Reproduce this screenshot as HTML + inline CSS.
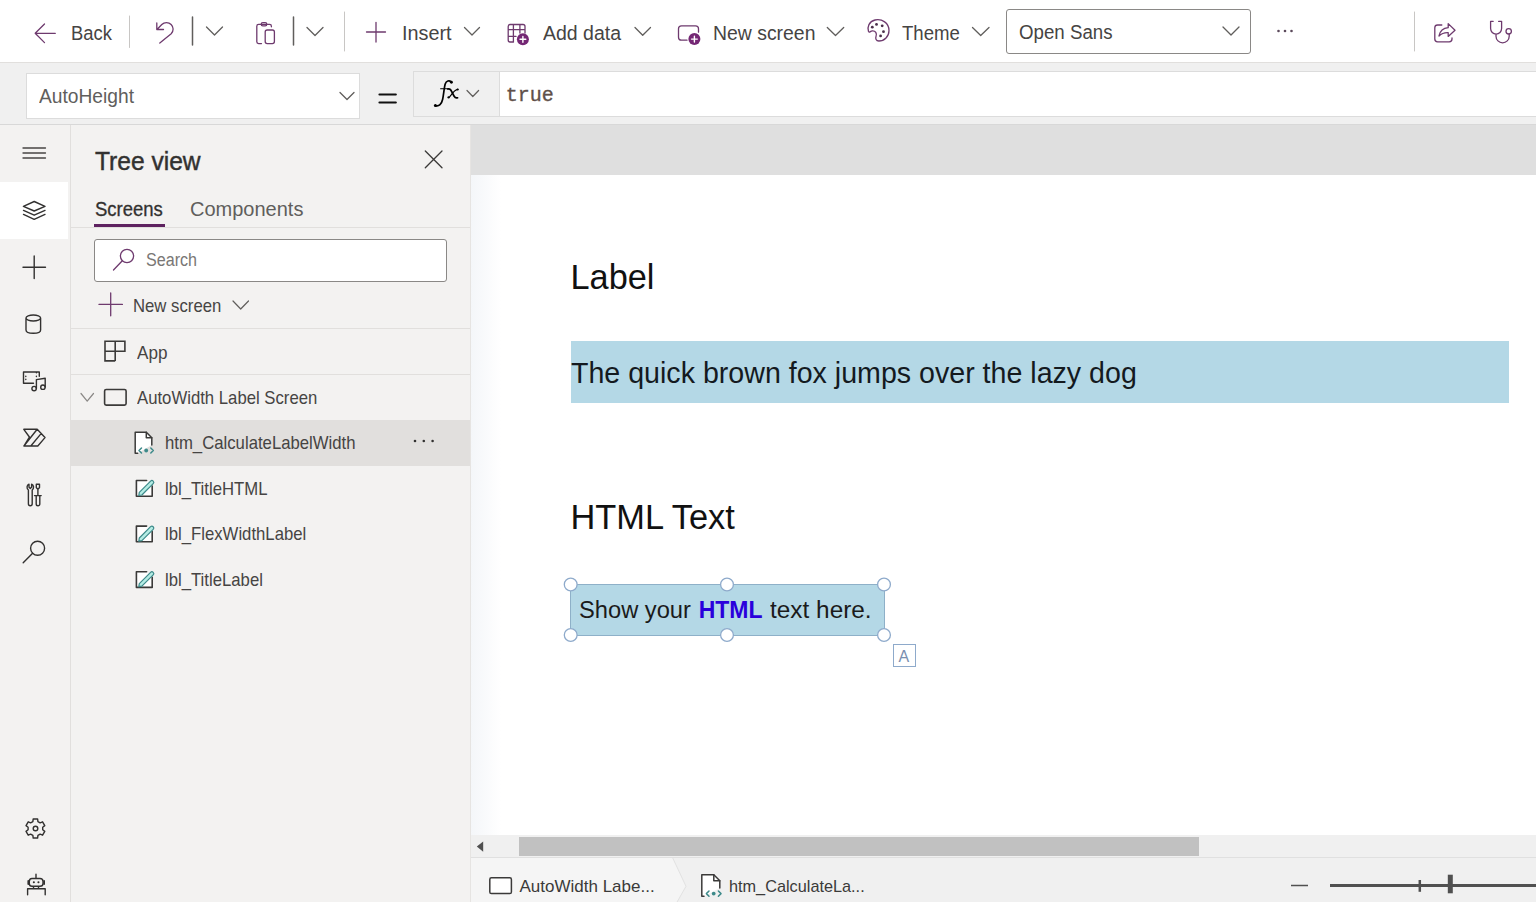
<!DOCTYPE html>
<html><head><meta charset="utf-8">
<style>
*{margin:0;padding:0;box-sizing:border-box}
html,body{width:1536px;height:902px;overflow:hidden;background:#fff;font-family:"Liberation Sans",sans-serif;color:#323130}
.a{position:absolute}
.t{position:absolute;white-space:nowrap;line-height:1;transform-origin:0 0}
svg.i{position:absolute;left:0;top:0;width:1536px;height:902px;overflow:visible}
</style></head><body>

<!-- ===== top toolbar ===== -->
<div class="a" style="left:0;top:0;width:1536px;height:63px;background:#fff;border-bottom:1px solid #e1dfdd"></div>
<div class="t" style="left:70.5px;top:22.9px;font-size:20px;transform:scaleX(.92);color:#464443">Back</div>
<div class="t" style="left:402.3px;top:22.8px;font-size:20px;transform:scaleX(.99);color:#464443">Insert</div>
<div class="t" style="left:543.2px;top:22.8px;font-size:20px;transform:scaleX(.975);color:#464443">Add data</div>
<div class="t" style="left:712.5px;top:22.8px;font-size:20px;transform:scaleX(.97);color:#464443">New screen</div>
<div class="t" style="left:901.8px;top:22.8px;font-size:20px;transform:scaleX(.93);color:#464443">Theme</div>
<div class="a" style="left:1006px;top:9px;width:245px;height:45px;border:1px solid #8a8886;border-radius:3px;background:#fff"></div>
<div class="t" style="left:1018.5px;top:22.1px;font-size:20px;transform:scaleX(.935);color:#464443">Open Sans</div>

<!-- ===== formula bar ===== -->
<div class="a" style="left:0;top:63px;width:1536px;height:62px;background:#f0f0f0;border-bottom:1px solid #d8d8d8"></div>
<div class="a" style="left:26px;top:73px;width:334px;height:46px;background:#fff;border:1px solid #dcdcdc"></div>
<div class="t" style="left:39px;top:85.6px;font-size:20px;transform:scaleX(.96);color:#605e5c">AutoHeight</div>
<div class="a" style="left:413px;top:71px;width:87px;height:46px;background:#f0f0f0;border:1px solid #dcdcdc"></div>
<div class="a" style="left:499px;top:71px;width:1037px;height:46px;background:#fff;border:1px solid #dcdcdc;border-right:none"></div>
<div class="t" style="left:505.8px;top:85.5px;font-size:20px;font-family:'Liberation Mono',monospace;-webkit-text-stroke:.35px #5f5049;color:#5f5049">true</div>
<svg class="i" viewBox="0 0 1536 902" fill="none" stroke="#000" stroke-linecap="round">
 <path d="M451,81.6 C449.3,80.2 446.3,80.6 445.2,84 C444.1,88 443.6,95 442.6,99.5 C441.6,104 439,106.6 435.6,105.6" stroke-width="1.7"/>
 <circle cx="451.4" cy="82.3" r="1.45" fill="#000" stroke="none"/>
 <circle cx="435.4" cy="105.4" r="1.5" fill="#000" stroke="none"/>
 <path d="M440.6,88.7 H448.6" stroke-width="1.1"/>
 <path d="M447.8,89 C449.5,88.6 450.8,89.5 451.6,91.5 L454,96 C455,97.8 456.2,98.3 457.6,97.8" stroke-width="1.7"/>
 <path d="M457.8,89.4 C455,89.6 452.2,93.4 450.6,95.6 C449.6,97 448.8,97.8 448.2,97.5" stroke-width="1.1"/>
 <circle cx="457.7" cy="89.5" r="1.1" fill="#000" stroke="none"/>
 <circle cx="448.6" cy="97.4" r="1.15" fill="#000" stroke="none"/>
</svg>

<!-- ===== left rail ===== -->
<div class="a" style="left:0;top:125px;width:71px;height:777px;background:#f3f2f1;border-right:1px solid #e1dfdd"></div>
<div class="a" style="left:0;top:182px;width:68px;height:57px;background:#fff"></div>

<!-- ===== tree view pane ===== -->
<div class="a" style="left:71px;top:125px;width:400px;height:777px;background:#f3f2f1;border-right:1px solid #e6e4e2"></div>
<div class="t" style="left:94.8px;top:147.7px;font-size:26px;font-weight:400;-webkit-text-stroke:.45px #323130;transform:scaleX(.945);color:#323130">Tree view</div>
<div class="t" style="left:94.6px;top:199.3px;font-size:20px;-webkit-text-stroke:.3px #323130;transform:scaleX(.925);color:#323130">Screens</div>
<div class="t" style="left:190px;top:199.3px;font-size:20px;color:#605e5c">Components</div>
<div class="a" style="left:94px;top:224px;width:71px;height:3px;background:#5e2260"></div>
<div class="a" style="left:71px;top:227px;width:399px;height:1px;background:#e1dfdd"></div>
<div class="a" style="left:94px;top:239px;width:353px;height:43px;border:1px solid #8a8886;border-radius:3px;background:#fff"></div>
<div class="t" style="left:146px;top:251.4px;font-size:18px;transform:scaleX(.895);color:#797775">Search</div>
<div class="t" style="left:133.1px;top:295.7px;font-size:19px;transform:scaleX(.88);color:#464443">New screen</div>
<div class="a" style="left:71px;top:328px;width:399px;height:1px;background:#e1dfdd"></div>
<div class="t" style="left:137.2px;top:342.8px;font-size:19px;transform:scaleX(.9);color:#464443">App</div>
<div class="a" style="left:71px;top:374px;width:399px;height:1px;background:#e1dfdd"></div>
<div class="t" style="left:137.2px;top:388.3px;font-size:19px;transform:scaleX(.88);color:#464443">AutoWidth Label Screen</div>
<div class="a" style="left:71px;top:420px;width:399px;height:46px;background:#e1dfdd"></div>
<div class="t" style="left:164.8px;top:433.4px;font-size:19px;transform:scaleX(.88);color:#464443">htm_CalculateLabelWidth</div>
<div class="t" style="left:164.6px;top:478.6px;font-size:19px;transform:scaleX(.88);color:#464443">lbl_TitleHTML</div>
<div class="t" style="left:164.6px;top:524.2px;font-size:19px;transform:scaleX(.88);color:#464443">lbl_FlexWidthLabel</div>
<div class="t" style="left:164.6px;top:569.5px;font-size:19px;transform:scaleX(.88);color:#464443">lbl_TitleLabel</div>

<!-- ===== canvas ===== -->
<div class="a" style="left:471px;top:125px;width:1065px;height:50px;background:#dfdfdf"></div>
<div class="a" style="left:471px;top:175px;width:1065px;height:660px;background:#fff"></div>
<div class="a" style="left:471px;top:175px;width:30px;height:660px;background:linear-gradient(to right,#f4f6f9,#fff)"></div>
<div class="t" style="left:570.5px;top:259.5px;font-size:34.3px;color:#111">Label</div>
<div class="a" style="left:571px;top:341px;width:938px;height:62px;background:#b4d8e6"></div>
<div class="t" style="left:571px;top:358.6px;font-size:29px;transform:scaleX(.986);color:#141a1f">The quick brown fox jumps over the lazy dog</div>
<div class="t" style="left:570.5px;top:499.8px;font-size:34.4px;color:#111">HTML Text</div>
<div class="a" style="left:570px;top:584px;width:315px;height:52px;background:#b4d8e6;border:1px solid #8eb0c8"></div>
<div class="t" style="left:578.7px;top:598.6px;font-size:23px;transform:scaleX(1.03);color:#1b1b1b">Show your</div>
<div class="t" style="left:698.7px;top:598.6px;font-size:23px;font-weight:700;color:#2a00dc">HTML</div>
<div class="t" style="left:770.4px;top:598.6px;font-size:23px;transform:scaleX(1.06);color:#1b1b1b">text here.</div>
<div class="a" style="left:893px;top:644px;width:23px;height:23px;border:1px solid #8eaacb;background:#fff"></div>
<div class="t" style="left:898.5px;top:649px;font-size:16px;color:#7a8fb0">A</div>

<!-- scrollbar -->
<div class="a" style="left:471px;top:835px;width:1065px;height:23px;background:#f0f0f0;border-bottom:1px solid #e0e0e0"></div>
<div class="a" style="left:519px;top:837px;width:680px;height:19px;background:#c1c1c1"></div>

<!-- status bar -->
<div class="a" style="left:471px;top:858px;width:1065px;height:44px;background:#f0f0f0"></div>
<svg class="i" viewBox="0 0 1536 902"><path d="M471,858 H672.5 L686,886.3 L677.1,902 H471 Z" fill="#f5f5f5"/><path d="M672.5,857.5 L686,886.3 L677.1,902" fill="none" stroke="#e2e2e2" stroke-width="1"/></svg>
<div class="t" style="left:519.5px;top:877.9px;font-size:17px;color:#3b3a39">AutoWidth Labe...</div>
<div class="t" style="left:729.3px;top:877.8px;font-size:17px;transform:scaleX(.957);color:#3b3a39">htm_CalculateLa...</div>

<!-- ===== icons ===== -->
<svg class="i" viewBox="0 0 1536 902" fill="none" stroke-linecap="round" stroke-linejoin="round">
 <!-- toolbar -->
 <g stroke="#6e3a6e" stroke-width="1.3">
  <path d="M35.2,33.3 H55.3 M44.5,24 L35.2,33.3 L44.5,42.6"/>
  <path d="M156.8,23 V29.5 H163.5 M157.2,29.2 L161.8,24.5 A6.6,6.6 0 0 1 171.2,33.8 L159.8,43"/>
  <path d="M261.5,43.6 H258.6 Q256.8,43.6 256.8,41.8 V26.2 Q256.8,24.4 258.6,24.4 H269.6 Q271.4,24.4 271.4,26.2 V26.8"/>
  <rect x="261.2" y="22.6" width="5.6" height="3.2" rx="1.6"/>
  <rect x="265.2" y="30" width="9.2" height="13.6" rx="2"/>
  <path d="M366.5,32 H385.5 M376,22.3 V42"/>
  <path d="M513.5,42 H510 Q508.2,42 508.2,40 V26.5 Q508.2,24.5 510.2,24.5 H523 Q525,24.5 525,26.5 V33 M508.2,29.6 H525 M508.2,36.4 H516 M513.4,24.5 V42 M519.9,24.5 V33"/>
  <path d="M687,40.2 H681.5 Q678.5,40.2 678.5,37.2 V28.8 Q678.5,25.8 681.5,25.8 H695.5 Q698.5,25.8 698.5,28.8 V32.2"/>
  <path d="M868.5,31.5 C867,27 869,21.5 875,20 C882,18.5 889,23 889,30.5 C889,36.5 884.5,41 878.8,41 C876,41 875.3,38.5 876,36.5 C877.2,33.5 875.5,30.5 872.3,30.8 C870.3,31 869.5,33.2 868.5,31.5 Z"/>
  <path d="M1441.8,25 H1437.6 Q1434.8,25 1434.8,27.8 V39 Q1434.8,41.8 1437.6,41.8 H1449.2 Q1452,41.8 1452,39 V38"/>
  <path d="M1439,36 C1440,31 1443,28 1448.2,27.7 V23.6 L1455,30.2 L1448.2,36.4 V32.7 C1444,32.5 1441,34 1439,36 Z"/>
  <path d="M1493.2,21.3 H1490.6 V28.6 A5.5,5.5 0 0 0 1501.6,28.6 V21.3 H1498.6 M1496,34.2 V36.2 A6.6,6.6 0 0 0 1509.2,36.2 V34"/>
  <circle cx="1508.7" cy="31.3" r="2.7"/>
 </g>
 <g fill="#742774">
  <circle cx="522.9" cy="39.3" r="6"/>
  <circle cx="694.4" cy="39.1" r="6"/>
 </g>
 <g stroke="#fff" stroke-width="1.4">
  <path d="M520,39.3 H525.8 M522.9,36.4 V42.2"/>
  <path d="M691.5,39.1 H697.3 M694.4,36.2 V42"/>
 </g>
 <g fill="#4a2f4a">
  <circle cx="872.3" cy="27.2" r="1.4"/><circle cx="876.5" cy="24.4" r="1.4"/><circle cx="882.2" cy="25.8" r="1.4"/><circle cx="883.5" cy="31.7" r="1.4"/><circle cx="880.6" cy="35.9" r="1.4"/>
 </g>
 <g stroke="#605e5c" stroke-width="1.3">
  <path d="M206.5,27 L214.5,35 L222.5,27"/>
  <path d="M307,27.5 L315,35.5 L323,27.5"/>
  <path d="M464.5,27.5 L472,35 L479.5,27.5"/>
  <path d="M635,27.5 L642.7,35.2 L650.5,27.5"/>
  <path d="M827.3,27.5 L835.5,35.5 L843.7,27.5"/>
  <path d="M972.5,27.5 L980.7,35.5 L989,27.5"/>
  <path d="M1223,27 L1231,35 L1239,27"/>
  <path d="M340,92.5 L347,99.5 L354,92.5"/>
 </g>
 <g stroke="#c8c6c4" stroke-width="1">
  <path d="M129.5,16 V47.5 M344.5,12 V51 M1414.5,12 V51"/>
 </g>
 <g stroke="#605e5c" stroke-width="1.5">
  <path d="M192.5,17 V45 M293.5,17 V45"/>
 </g>
 <g fill="#5c4a5c">
  <circle cx="1278.5" cy="31" r="1.3"/><circle cx="1285" cy="31" r="1.3"/><circle cx="1291.5" cy="31" r="1.3"/>
 </g>
 <!-- formula -->
 <g stroke="#111" stroke-width="2.2"><path d="M379.5,94.5 H395.8 M379.5,102.5 H395.8"/></g>
 <g stroke="#605e5c" stroke-width="1.2"><path d="M467,90.5 L472.8,96.5 L478.6,90.5"/></g>
</svg>


<!-- ===== rail, tree & canvas icons ===== -->
<svg class="i" viewBox="0 0 1536 902" fill="none" stroke-linecap="round" stroke-linejoin="round">
 <g stroke="#323130" stroke-width="1.4">
  <path d="M23,148 H45.5 M23,153 H45.5 M23,158 H45.5" stroke="#484644" stroke-width="1.3"/>
  <path d="M34.2,201.5 L45,206.4 L34.2,211 L23.4,206.4 Z M23.5,210.4 L34.2,215.2 L45,210.4 M23.5,214.4 L34.2,219.4 L45,214.4"/>
  <path d="M23,267.3 H45.5 M34.2,256 V278.6"/>
  <path d="M26,318 V330 Q26,333.3 33.3,333.3 Q40.6,333.3 40.6,330 V318 M26,318 A7.3,3 0 0 0 40.6,318 A7.3,3 0 0 0 26,318"/>
  <path d="M39.3,376.3 V372 H23.5 V383.2 H33.5 M25.8,376.3 V376.5 M25.8,379.3 V379.5 M36.4,372.5 V372.7 M36.4,376.3 V376.5"/>
  <path d="M36.4,388.5 V379.6 L45.2,378.2 V387"/>
  <circle cx="34.1" cy="388.6" r="2.2"/><circle cx="42.9" cy="387.2" r="2.2"/>
  <path d="M23.8,429.3 H37.2 L45,437.6 L37.8,446 H23.9 L29.4,437 Z M37.2,429.3 L23.9,446 M41.1,433.6 L30.8,446"/>
  <path d="M28.4,490 V503.8 A1.9,1.9 0 0 0 32.2,503.8 V490 A3.4,3.4 0 0 0 31.6,484.2 V487.3 L30.3,488.4 L29,487.3 V484.2 A3.4,3.4 0 0 0 28.4,490 Z"/>
  <path d="M36.3,484.3 H39.5 V487.5 L38.6,488.7 H37.2 L36.3,487.5 Z M37.9,488.7 V495.5 M34.5,495.6 H41.2 M36.2,495.6 V504 A1.8,1.8 0 0 0 39.8,504 V495.6"/>
  <circle cx="37.6" cy="548.3" r="7"/><path d="M32.6,553.3 L23.2,562.7"/>
  <path d="M32.87,821.55 L33.20,818.95 L37.60,818.95 L37.93,821.55 L40.16,822.83 L42.57,821.82 L44.77,825.63 L42.69,827.22 L42.69,829.78 L44.77,831.37 L42.57,835.18 L40.16,834.17 L37.93,835.45 L37.60,838.05 L33.20,838.05 L32.87,835.45 L30.64,834.17 L28.23,835.18 L26.03,831.37 L28.11,829.78 L28.11,827.22 L26.03,825.63 L28.23,821.82 L30.64,822.83 Z"/>
  <circle cx="35.5" cy="828.5" r="2.3"/>
  <path d="M36,874.3 V878.3 M32,878.5 H40 Q43,878.5 43,881.5 V883.5 Q43,886.3 40,886.3 H32 Q29.3,886.3 29.3,883.5 V881.5 Q29.3,878.5 32,878.5 Z M33.5,886.3 V888.8 M38.5,886.3 V888.8 M27.6,894.8 V888.8 H45.2 V894.8"/>
  <path d="M33.8,882.2 h.1 M38.4,882.2 h.1" stroke-width="2"/>
  <path d="M28.3,881 V884 M44.1,881 V884" stroke-width="1.8"/>
 </g>
 <g stroke="#3b3a39" stroke-width="1.3">
  <path d="M425.3,151 L442,167.8 M442,151 L425.3,167.8"/>
 </g>
 <g stroke="#6e3a6e" stroke-width="1.3">
  <circle cx="127" cy="256" r="6.6"/><path d="M122.3,260.8 L113.5,270"/>
  <path d="M99,304.4 H122.4 M110.7,293 V315.8"/>
 </g>
 <g stroke="#605e5c" stroke-width="1.2">
  <path d="M233,301 L240.7,309 L248.5,301"/>
  <path d="M81,393.5 L87.2,401.2 L93.5,393.5" stroke="#8a8886"/>
 </g>
 <g stroke="#3b3a39" stroke-width="1.6" stroke-linecap="butt" stroke-linejoin="miter">
  <path d="M105,341.2 H124.9 V351.2 H105 Z M115.2,341.2 V360.9 M105,341.2 V360.9 H115.2"/>
  <rect x="104.6" y="389.5" width="21.5" height="15.6" rx="1.6"/>
 </g>
 <g fill="#323130">
  <circle cx="415" cy="441" r="1.3"/><circle cx="423.8" cy="441" r="1.3"/><circle cx="432.6" cy="441" r="1.3"/>
 </g>
 <!-- html icon (tree) -->
 <g>
  <path d="M137.7,453.2 H135.2 V432.3 H146.3 L151.8,437.8 V445" fill="#fff" stroke="#3b3a39" stroke-width="1.5"/>
  <path d="M146.3,432.3 V437.8 H151.8" stroke="#3b3a39" stroke-width="1.5"/>
  <path d="M141.5,448 L139,450.5 L141.5,453 M150.8,448 L153.3,450.5 L150.8,453" stroke="#3d8a8a" stroke-width="1.5"/>
  <circle cx="146.2" cy="450.5" r="1.9" fill="#3d8a8a"/>
 </g>
 <!-- label icons -->
 <g id="lblic">
  <path d="M146.6,480.5 H136.4 V496.2 H152.2 V486" stroke="#3b3a39" stroke-width="1.6" fill="#fff"/>
  <path d="M139.3,492.4 L150.6,481.1 A1.8,1.8 0 0 1 153.2,483.7 L141.9,495 L138.8,495.5 Z" stroke="#3d8a8a" stroke-width="1.2" fill="#b4ece4"/>
 </g>
 <use href="#lblic" y="45.6"/>
 <use href="#lblic" y="91.2"/>
 <!-- handles -->
 <g fill="#fff" stroke="#8eaacb" stroke-width="1.3">
  <circle cx="570.7" cy="584.5" r="6.4"/><circle cx="727" cy="584.5" r="6.4"/><circle cx="884" cy="584.5" r="6.4"/>
  <circle cx="570.7" cy="635" r="6.4"/><circle cx="727" cy="635" r="6.4"/><circle cx="884" cy="635" r="6.4"/>
 </g>
 <!-- scrollbar arrow -->
 <path d="M483.2,841.4 V851.8 L476.8,846.6 Z" fill="#505050"/>
 <!-- status bar -->
 <rect x="489.8" y="877.8" width="21.6" height="15.8" rx="1.6" stroke="#3b3a39" stroke-width="1.5" fill="#fff"/>
 <g>
  <path d="M704,896.3 H701.8 V874.8 H713.8 L719.8,880.8 V888" fill="#fff" stroke="#3b3a39" stroke-width="1.5"/>
  <path d="M713.8,874.8 V880.8 H719.8" stroke="#3b3a39" stroke-width="1.5"/>
  <path d="M709,891 L706.4,893.6 L709,896.2 M718.4,891 L721,893.6 L718.4,896.2" stroke="#3d8a8a" stroke-width="1.5"/>
  <circle cx="713.7" cy="893.6" r="1.9" fill="#3d8a8a"/>
 </g>
 <g stroke="#505050" stroke-linecap="butt">
  <path d="M1291,885.5 H1308" stroke-width="1.5"/>
  <path d="M1330,885.5 H1536" stroke-width="3"/>
  <path d="M1419.8,880 V891.8" stroke-width="2.5"/>
  <path d="M1450.3,874.7 V893.3" stroke-width="5"/>
 </g>
</svg>

</body></html>
